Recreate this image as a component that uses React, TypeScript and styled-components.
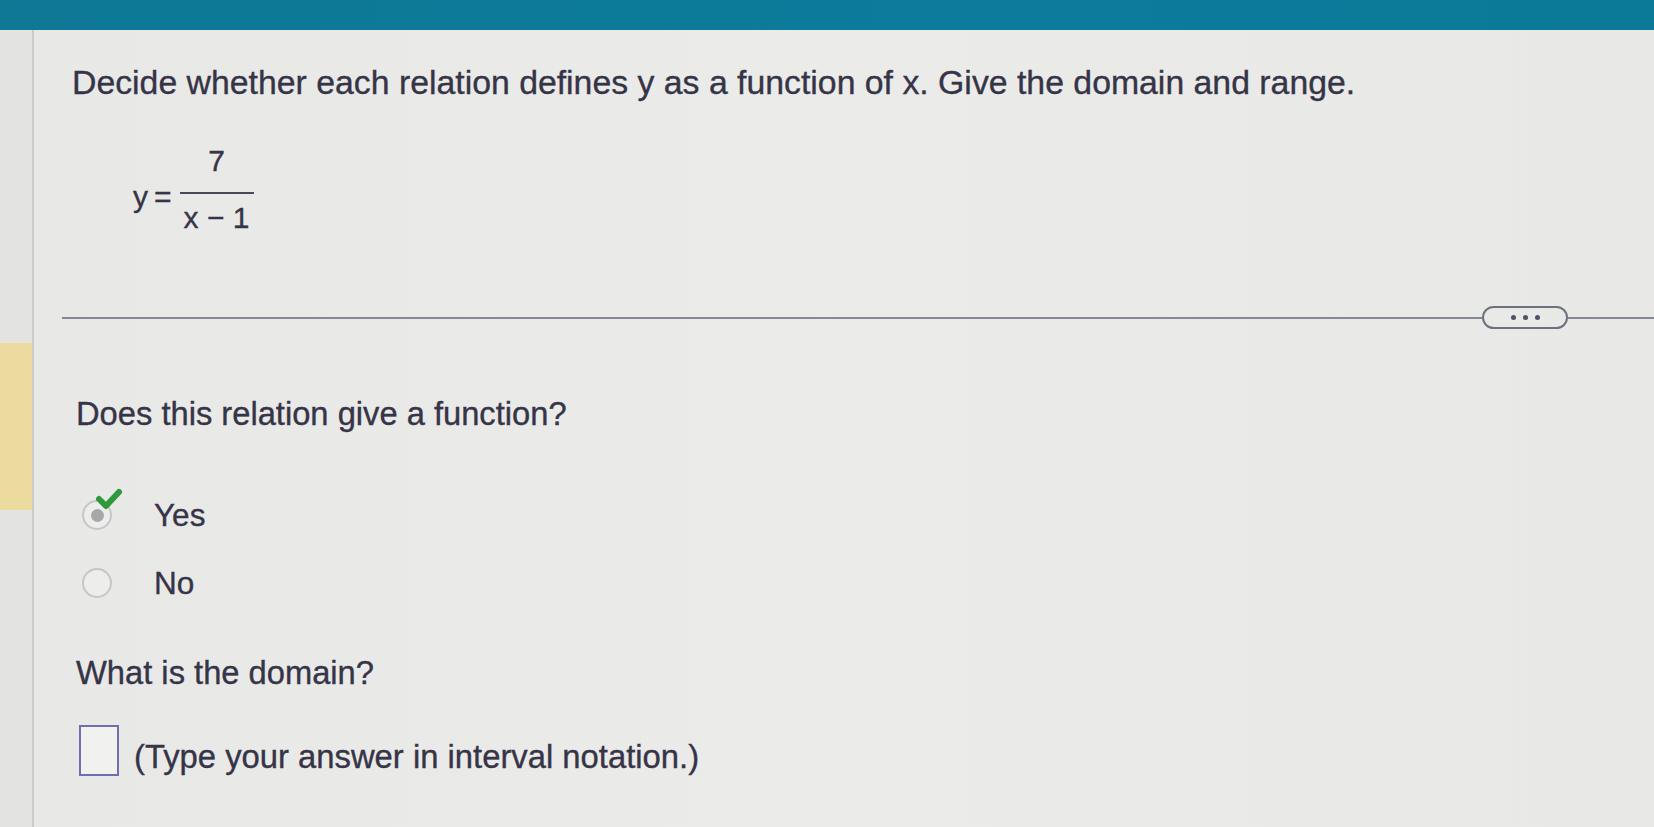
import React from "react";
import styled, { createGlobalStyle } from "styled-components";

const Global = createGlobalStyle`
  html, body { margin: 0; padding: 0; }
  body {
    width: 1654px; height: 827px; overflow: hidden;
    background: #e9e9e7;
    font-family: "Liberation Sans", Arial, sans-serif;
    color: #363447;
    -webkit-text-stroke: 0.35px #363447;
  }
`;

const Page = styled.div`
  display: flex;
  flex-direction: column;
  width: 1654px;
  height: 827px;
`;

const TopBar = styled.div`
  height: 30px;
  flex: none;
  background: linear-gradient(90deg, #0e7895 0%, #0b7c9c 60%, #0a7a98 100%);
`;

const Body = styled.div`
  flex: 1;
  display: flex;
  background: linear-gradient(90deg, #e8e8e6 0%, #ebebe9 50%, #e8e8e6 100%);
`;

const Gutter = styled.div`
  width: 32px;
  flex: none;
  background: #e3e3e1;
  border-right: 2px solid #cacacf;
  display: flex;
  flex-direction: column;
`;

const Highlight = styled.div`
  margin-top: 313px;
  height: 167px;
  background: #ecdb9f;
`;

const Main = styled.div`
  flex: 1;
  display: flex;
  flex-direction: column;
  padding: 32px 0 0 38px;
`;

const Title = styled.div`
  font-size: 33.8px;
  line-height: 40px;
`;

const Equation = styled.div`
  display: flex;
  align-items: center;
  margin: 44px 0 0 61px;
  font-size: 30px;
  gap: 8px;
`;

const Lhs = styled.span`
  padding-top: 14px;
`;

const Fraction = styled.span`
  display: inline-flex;
  flex-direction: column;
  align-items: center;
`;

const Numer = styled.span`
  line-height: 30px;
  padding-bottom: 16px;
`;

const Bar = styled.span`
  width: 74px;
  height: 2px;
  background: #4a4858;
`;

const Denom = styled.span`
  line-height: 30px;
  padding-top: 9px;
`;

const DividerRow = styled.div`
  display: flex;
  align-items: center;
  margin: 73px 0 0 -10px;
`;

const Rule = styled.div<{ $w?: number }>`
  flex: ${(p) => (p.$w ? "none" : "1")};
  width: ${(p) => (p.$w ? `${p.$w}px` : "auto")};
  height: 2px;
  background: #858995;
`;

const MoreButton = styled.div`
  width: 82px;
  height: 19px;
  border: 2.5px solid #6d717e;
  border-radius: 12px;
  display: flex;
  align-items: center;
  justify-content: center;
  gap: 7px;
  flex: none;
`;

const Dot = styled.span`
  width: 5px;
  height: 5px;
  border-radius: 50%;
  background: #4f5368;
`;

const Question = styled.div<{ $mt: number }>`
  font-size: 32.7px;
  line-height: 40px;
  margin-top: ${(p) => p.$mt}px;
  padding-left: 4px;
`;

const Options = styled.div`
  display: flex;
  flex-direction: column;
  gap: 32px;
  margin-top: 63px;
`;

const Option = styled.div`
  display: flex;
  align-items: center;
  height: 36px;
  font-size: 31.5px;
`;

const RadioWrap = styled.span`
  position: relative;
  width: 30px;
  height: 30px;
  margin-left: 10px;
  margin-right: 42px;
  flex: none;
`;

const Radio = styled.span<{ $checked?: boolean }>`
  display: flex;
  align-items: center;
  justify-content: center;
  width: 30px;
  height: 30px;
  box-sizing: border-box;
  border-radius: 50%;
  border: 2.5px solid #c6c6c6;
  background: #ededeb;
  &::after {
    content: "";
    display: ${(p) => (p.$checked ? "block" : "none")};
    width: 13px;
    height: 13px;
    border-radius: 50%;
    background: #a7a7a9;
  }
`;

const Check = styled.svg`
  position: absolute;
  left: 13px;
  top: -12px;
  width: 28px;
  height: 24px;
`;

const AnswerRow = styled.div`
  display: flex;
  align-items: center;
  gap: 15px;
  margin-top: 30px;
  padding-left: 7px;
`;

const AnswerBox = styled.div`
  width: 40px;
  height: 51px;
  box-sizing: border-box;
  border: 2px solid #6f6db4;
  background: #f1f1ef;
  flex: none;
`;

const Hint = styled.span`
  font-size: 32.8px;
  line-height: 40px;
  padding-top: 14px;
`;

export default function App() {
  return (
    <>
      <Global />
      <Page>
        <TopBar />
        <Body>
          <Gutter>
            <Highlight />
          </Gutter>
          <Main>
            <Title>
              Decide whether each relation defines y as a function of x. Give the domain and range.
            </Title>
            <Equation>
              <Lhs>y{"\u2009"}=</Lhs>
              <Fraction>
                <Numer>7</Numer>
                <Bar />
                <Denom>x − 1</Denom>
              </Fraction>
            </Equation>
            <DividerRow>
              <Rule />
              <MoreButton>
                <Dot />
                <Dot />
                <Dot />
              </MoreButton>
              <Rule $w={86} />
            </DividerRow>
            <Question $mt={65}>Does this relation give a function?</Question>
            <Options>
              <Option>
                <RadioWrap>
                  <Radio $checked />
                  <Check viewBox="0 0 28 24">
                    <path
                      d="M4 11 L11 18 L24 4"
                      fill="none"
                      stroke="#2f9a3c"
                      strokeWidth="6"
                      strokeLinecap="round"
                      strokeLinejoin="round"
                    />
                  </Check>
                </RadioWrap>
                Yes
              </Option>
              <Option>
                <RadioWrap>
                  <Radio />
                </RadioWrap>
                No
              </Option>
            </Options>
            <Question $mt={52}>What is the domain?</Question>
            <AnswerRow>
              <AnswerBox />
              <Hint>(Type your answer in interval notation.)</Hint>
            </AnswerRow>
          </Main>
        </Body>
      </Page>
    </>
  );
}
